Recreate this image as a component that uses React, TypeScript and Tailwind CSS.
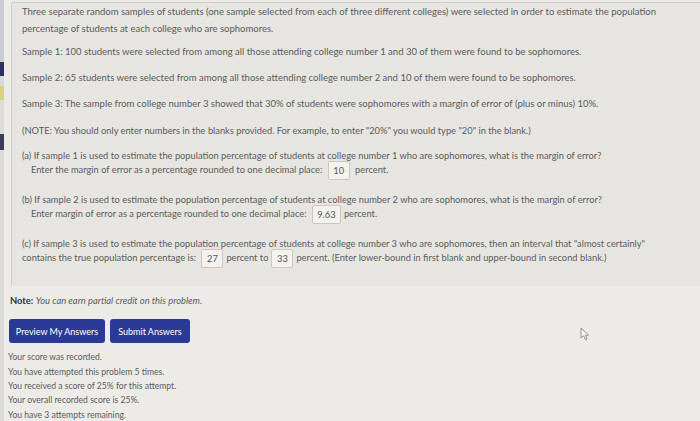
import React from "react";

function Box({ v, w, border }: { v: string; w: string; border: string }) {
  return (
    <span
      className={`inline-flex items-center justify-center h-[19px] -my-[3px] mx-[3px] align-middle bg-[#f3f2ef] rounded-[2px] border ${w} ${border} text-[#555]`}
    >
      {v}
    </span>
  );
}

export default function App() {
  return (
    <div
      className="relative w-[700px] h-[421px] overflow-hidden bg-[#ecebe7] text-[#5b5b5b] flex"
      style={{ fontFamily: "Lato, 'Open Sans', sans-serif" }}
    >
      {/* left strip */}
      <div className="w-[4px] flex flex-col shrink-0">
        <div className="h-[62px] bg-[#c9ccd0]" />
        <div className="h-[14px] bg-[#2c3160]" />
        <div className="h-[10px] bg-[#d8d9d6]" />
        <div className="h-[14px] bg-[#d9d27a]" />
        <div className="h-[34px] bg-[#dcdcd8]" />
        <div className="h-[16px] bg-[#3a3d55]" />
        <div className="flex-1 bg-[#dcdbd7]" />
      </div>
      <div className="flex-1 pl-[4px] flex flex-col">
        {/* problem panel */}
        <div className="mt-[2px] ml-[3px] bg-[#e6e5e1] border-l border-t border-[#cfcdc8] rounded-tl-[3px] pl-[10px] pr-[20px] pb-[21px] text-[9.5px]">
          <div className="leading-[17px] pt-[0px]">
            Three separate random samples of students (one sample selected from each of three different colleges) were selected in order to estimate the population
            <br />
            percentage of students at each college who are sophomores.
          </div>
          <div className="leading-[17px] mt-[6px]">
            Sample 1: 100 students were selected from among all those attending college number 1 and 30 of them were found to be sophomores.
          </div>
          <div className="leading-[17px] mt-[9px]">
            Sample 2: 65 students were selected from among all those attending college number 2 and 10 of them were found to be sophomores.
          </div>
          <div className="leading-[17px] mt-[9px]">
            Sample 3: The sample from college number 3 showed that 30% of students were sophomores with a margin of error of (plus or minus) 10%.
          </div>
          <div className="leading-[17px] mt-[10px] text-[9.3px]">
            (NOTE: You should only enter numbers in the blanks provided. For example, to enter "20%" you would type "20" in the blank.)
          </div>
          <div className="text-[9.3px]">
            <div className="leading-[14px] mt-[10px]">
              (a) If sample 1 is used to estimate the population percentage of students at college number 1 who are sophomores, what is the margin of error?
            </div>
            <div className="leading-[14px] pl-[9px]">
              Enter the margin of error as a percentage rounded to one decimal place:{" "}
              <Box v="10" w="w-[22px]" border="border-[#c9c8c2]" /> percent.
            </div>
            <div className="leading-[14px] mt-[16px]">
              (b) If sample 2 is used to estimate the population percentage of students at college number 2 who are sophomores, what is the margin of error?
            </div>
            <div className="leading-[14px] pl-[9px]">
              Enter margin of error as a percentage rounded to one decimal place:{" "}
              <Box v="9.63" w="w-[29px]" border="border-[#d8bfbd]" />percent.
            </div>
            <div className="leading-[14px] mt-[16px]">
              (c) If sample 3 is used to estimate the population percentage of students at college number 3 who are sophomores, then an interval that "almost certainly"
            </div>
            <div className="leading-[14px]">
              contains the true population percentage is:{" "}
              <Box v="27" w="w-[22px]" border="border-[#d9c0bd]" />percent to
              <Box v="33" w="w-[22px]" border="border-[#cbc9c3]" />percent. (Enter lower-bound in first blank and upper-bound in second blank.)
            </div>
          </div>
        </div>

        <div className="mt-[8px] ml-[2px] leading-[14px] text-[9.4px]">
          <span className="font-bold text-[#333]">Note:</span>{" "}
          <span className="italic">You can earn partial credit on this problem.</span>
        </div>

        <div className="mt-[11px] ml-[1px] flex gap-[5px]">
          <div className="h-[24px] w-[96px] rounded-[3px] bg-[#2b3a96] text-white text-[9px] flex items-center justify-center">
            Preview My Answers
          </div>
          <div className="h-[24px] w-[80px] rounded-[3px] bg-[#2b3a96] text-white text-[9px] flex items-center justify-center">
            Submit Answers
          </div>
        </div>

        <div className="mt-[7px] leading-[14.3px] text-[8.6px]">
          <div>Your score was recorded.</div>
          <div>You have attempted this problem 5 times.</div>
          <div>You received a score of 25% for this attempt.</div>
          <div>Your overall recorded score is 25%.</div>
          <div>You have 3 attempts remaining.</div>
        </div>
      </div>

      {/* mouse cursor */}
      <svg className="absolute left-[580px] top-[327px]" width="10" height="14" viewBox="0 0 10 14">
        <path d="M1 1 L1 11 L3.5 8.8 L5.5 12.8 L7 12 L5.2 8.2 L8.6 8.2 Z" fill="#f5f5f5" stroke="#888" strokeWidth="0.9" />
      </svg>
    </div>
  );
}
